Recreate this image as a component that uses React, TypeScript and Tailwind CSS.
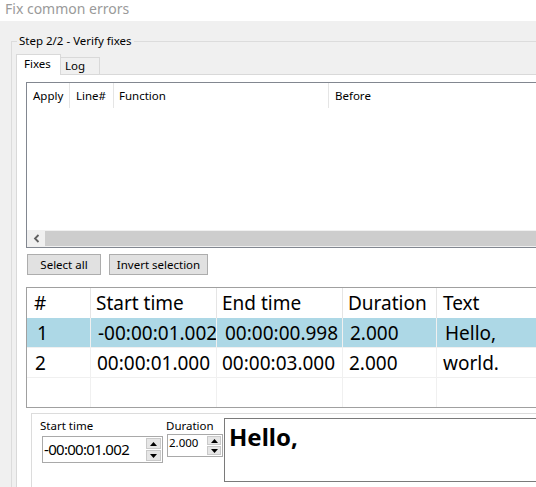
import type { ReactNode } from 'react';

const Arrow = ({ up }: { up: boolean }) => (
  <svg width="7" height="4" viewBox="0 0 7 4" className="block">
    <path d={up ? 'M0 4 L3.5 0 L7 4 Z' : 'M0 0 L3.5 4 L7 0 Z'} fill="#000" />
  </svg>
);

const Spinner = ({ className }: { className: string }) => (
  <div className={`flex flex-col gap-[1px] ${className}`}>
    <div className="flex flex-1 items-center justify-center border border-[#c9c9c9] bg-[#e6e6e6]">
      <Arrow up />
    </div>
    <div className="flex flex-1 items-center justify-center border border-[#c9c9c9] bg-[#e6e6e6]">
      <Arrow up={false} />
    </div>
  </div>
);

const Button = ({ width, children }: { width: string; children: ReactNode }) => (
  <div
    className={`flex h-[21px] items-center justify-center border border-[#adadad] bg-[#e1e1e1] text-[11.5px] leading-[16px] ${width}`}
  >
    {children}
  </div>
);

const rows = [
  { no: '1', start: '-00:00:01.002', end: '00:00:00.998', dur: '2.000', text: 'Hello,', selected: true },
  { no: '2', start: '00:00:01.000', end: '00:00:03.000', dur: '2.000', text: 'world.', selected: false },
];

export default function App() {
  return (
    <div className="h-[487px] w-[536px] overflow-hidden bg-[#f0f0f0] font-['Noto_Sans',sans-serif] text-black">
      <div className="h-[21px] bg-white pl-[5px] text-[14px] leading-[18px] text-[#9a9a9a]">Fix common errors</div>

      <div className="pl-[11px] pt-[20px]">
        <div className="relative w-[620px] border-l border-t border-[#dcdcdc] pl-[4px] pt-[12px]">
          <span className="absolute left-[5px] top-[-9px] bg-[#f0f0f0] px-[2px] text-[11.5px] leading-[16px]">
            Step 2/2 - Verify fixes
          </span>

          {/* tabs */}
          <div className="flex h-[20px] items-end">
            <div className="relative z-10 -mb-px h-[21px] w-[45px] border-l border-r border-t border-[#d9d9d9] bg-white pl-[7px] pt-[1px] text-[11.5px] leading-[16px]">
              Fixes
            </div>
            <div className="h-[17px] w-[39px] border-r border-t border-[#d9d9d9] pl-[4px] text-[11.5px] leading-[16px]">
              Log
            </div>
          </div>

          <div className="h-[500px] border-l border-t border-[#d9d9d9] bg-white pl-[9px] pt-[7px]">
            {/* fixes list */}
            <div className="flex h-[166px] w-[600px] flex-col border border-[#828790] bg-white">
              <div className="flex h-[25px] text-[11.5px] leading-[16px]">
                <div className="flex w-[43px] items-center border-r border-[#e5e5e5] pl-[6px] pt-[1px]">Apply</div>
                <div className="flex w-[44px] items-center border-r border-[#e5e5e5] pl-[6px] pt-[1px]">Line#</div>
                <div className="flex w-[215px] items-center border-r border-[#e5e5e5] pl-[5px] pt-[1px]">Function</div>
                <div className="flex items-center pl-[6px] pt-[1px]">Before</div>
              </div>
              <div className="mt-auto flex h-[17px] bg-[#f0f0f0]">
                <div className="flex w-[18px] items-center justify-center">
                  <svg width="7" height="9" viewBox="0 0 7 9">
                    <path d="M5.5 1 L2 4.5 L5.5 8" fill="none" stroke="#606060" strokeWidth="1.8" />
                  </svg>
                </div>
                <div className="my-[1px] flex-1 bg-[#cdcdcd]" />
              </div>
            </div>

            <div className="ml-[1px] mt-[6px] flex gap-[8px]">
              <Button width="w-[74px]">Select all</Button>
              <Button width="w-[99px]">Invert selection</Button>
            </div>

            {/* subtitle grid */}
            <div className="mt-[12px] w-[600px] border border-[#a0a0a0] bg-white text-[19px] leading-[30px]">
              <div className="flex h-[30px]">
                <div className="w-[64px] border-r border-[#e5e5e5] pl-[7px]">#</div>
                <div className="w-[126px] border-r border-[#e5e5e5] pl-[5px]">Start time</div>
                <div className="w-[126px] border-r border-[#e5e5e5] pl-[5px]">End time</div>
                <div className="w-[94px] border-r border-[#e5e5e5] pl-[5px]">Duration</div>
                <div className="pl-[6px]">Text</div>
              </div>
              {rows.map((row) => (
                <div
                  key={row.no}
                  className={`flex h-[30px] border-b border-[#f0f0f0] ${row.selected ? 'bg-[#add8e6]' : ''}`}
                >
                  <div className={`w-[64px] border-r border-[#f0f0f0] ${row.selected ? 'pl-[10px]' : 'pl-[8px]'}`}>
                    {row.no}
                  </div>
                  <div
                    className={`w-[126px] overflow-hidden whitespace-nowrap border-r border-[#f0f0f0] ${row.selected ? 'pl-[7px]' : 'pl-[6px]'}`}
                  >
                    {row.start}
                  </div>
                  <div
                    className={`w-[126px] overflow-hidden whitespace-nowrap border-r border-[#f0f0f0] ${row.selected ? 'pl-[8px]' : 'pl-[5px]'}`}
                  >
                    {row.end}
                  </div>
                  <div
                    className={`w-[94px] border-r border-[#f0f0f0] ${row.selected ? 'pl-[7px]' : 'pl-[6px]'}`}
                  >
                    {row.dur}
                  </div>
                  <div className={row.selected ? 'pl-[8px]' : 'pl-[6px]'}>{row.text}</div>
                </div>
              ))}
              <div className="flex h-[29px]">
                <div className="w-[64px] border-r border-[#f0f0f0]" />
                <div className="w-[126px] border-r border-[#f0f0f0]" />
                <div className="w-[126px] border-r border-[#f0f0f0]" />
                <div className="w-[94px] border-r border-[#f0f0f0]" />
              </div>
            </div>

            {/* edit panel */}
            <div className="ml-[5px] mt-[5px] flex h-[100px] border-l border-t border-[#dcdcdc] pt-[4px]">
              <div className="w-[131px] pl-[8px]">
                <div className="text-[11.5px] leading-[16px]">Start time</div>
                <div className="ml-[2px] mt-[2px] flex h-[27px] w-[121px] border border-[#a9a9a9] bg-white">
                  <div className="flex-1 pl-[1px] text-[15px] leading-[25px] tracking-[-0.7px]">-00:00:01.002</div>
                  <Spinner className="my-[1px] mr-[1px] w-[15px]" />
                </div>
              </div>
              <div className="ml-[3px] w-[57px]">
                <div className="text-[11.5px] leading-[16px]">Duration</div>
                <div className="ml-[1px] flex h-[23px] w-[56px] border border-[#a9a9a9] bg-white">
                  <div className="flex-1 pl-[1px] text-[11.5px] leading-[16px]">2.000</div>
                  <Spinner className="my-[1px] mr-[1px] w-[14px]" />
                </div>
              </div>
              <div className="ml-[1px] h-[64px] w-[340px] border border-[#7a7a7a] bg-white px-[4px] pt-[2px] text-[24px] font-bold leading-[32px]">
                Hello,
              </div>
            </div>
          </div>
        </div>
      </div>
    </div>
  );
}
